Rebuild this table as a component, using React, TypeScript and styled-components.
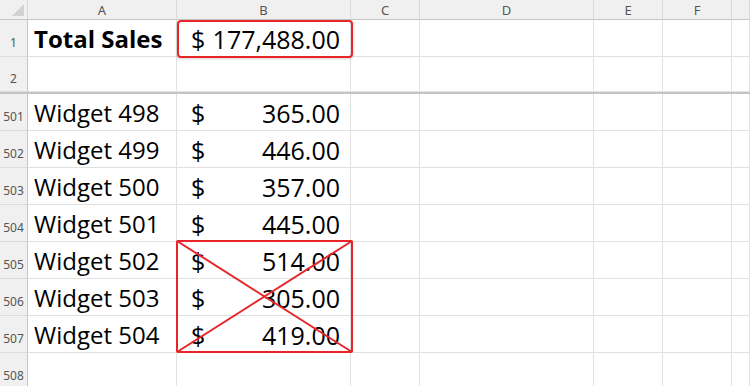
import * as React from 'react';
import styled, { createGlobalStyle } from 'styled-components';

const GlobalStyle = createGlobalStyle`
    html, body {
        margin: 0;
        padding: 0;
        background: #ffffff;
    }
    body {
        font-family: "Open Sans", "Noto Sans", sans-serif;
    }
`;

const COLS = '28px 149px 174px 69px 174px 69px 69px 1fr';

const Sheet = styled.div`
    position: relative;
    width: 750px;
    height: 386px;
    overflow: hidden;
    background: #ffffff;
`;

const Row = styled.div<{ $height: number; $frozen?: boolean }>`
    display: grid;
    grid-template-columns: ${COLS};
    height: ${(p) => p.$height}px;
    box-sizing: border-box;
    border-bottom: ${(p) => (p.$frozen ? '2px solid #c4c4c4' : 'none')};
`;

const ColHeader = styled.div`
    display: flex;
    align-items: center;
    justify-content: center;
    background: #f0f0f0;
    border-right: 1px solid #d9d9d9;
    border-bottom: 1px solid #c6c6c6;
    box-sizing: border-box;
    font-family: "Noto Sans", sans-serif;
    font-size: 13px;
    color: #555555;
    padding-top: 1px;
`;

const Corner = styled(ColHeader)`
    position: relative;
    &::after {
        content: '';
        position: absolute;
        right: 3px;
        bottom: 3px;
        width: 0;
        height: 0;
        border-left: 12px solid transparent;
        border-bottom: 12px solid #d2d2d2;
    }
`;

const RowHeader = styled.div`
    display: flex;
    align-items: center;
    justify-content: center;
    background: #f0f0f0;
    border-right: 1px solid #c6c6c6;
    border-bottom: 1px solid #dcdcdc;
    box-sizing: border-box;
    font-family: "Noto Sans", sans-serif;
    font-size: 12px;
    color: #555555;
    padding-top: 8px;
`;

const Cell = styled.div<{ $bold?: boolean }>`
    display: flex;
    align-items: center;
    border-right: 1px solid #e1e1e1;
    border-bottom: 1px solid #e1e1e1;
    box-sizing: border-box;
    padding: 1px 6px 0 6px;
    font-size: 24px;
    font-weight: ${(p) => (p.$bold ? 700 : 400)};
    color: #000000;
    white-space: nowrap;
    overflow: hidden;
`;

const MoneyCell = styled(Cell)`
    justify-content: space-between;
    padding: 1px 10px 0 14px;
`;

// digits in the sheet's font run a little wider than Open Sans
const Amount = styled.span`
    font-size: 25px;
`;

const Highlight = styled.div`
    position: absolute;
    left: 177px;
    top: 20px;
    width: 176px;
    height: 38px;
    box-sizing: border-box;
    border: 2px solid #e8262a;
    border-radius: 4px;
    box-shadow: 0 1px 3px rgba(0, 0, 0, 0.18);
    pointer-events: none;
`;

const CrossOut = styled.svg`
    position: absolute;
    left: 176px;
    top: 240px;
    overflow: visible;
    pointer-events: none;
`;

const columns = ['A', 'B', 'C', 'D', 'E', 'F', ''];

const items = [
    { n: 501, name: 'Widget 498', price: '365.00' },
    { n: 502, name: 'Widget 499', price: '446.00' },
    { n: 503, name: 'Widget 500', price: '357.00' },
    { n: 504, name: 'Widget 501', price: '445.00' },
    { n: 505, name: 'Widget 502', price: '514.00' },
    { n: 506, name: 'Widget 503', price: '305.00' },
    { n: 507, name: 'Widget 504', price: '419.00' },
];

const EmptyCells = ({ count }: { count: number }) => (
    <>
        {Array.from({ length: count }).map((_, i) => (
            <Cell key={i} />
        ))}
    </>
);

export default function App() {
    return (
        <Sheet>
            <GlobalStyle />
            <Row $height={20}>
                <Corner />
                {columns.map((c, i) => (
                    <ColHeader key={i}>{c}</ColHeader>
                ))}
            </Row>
            <Row $height={37}>
                <RowHeader>1</RowHeader>
                <Cell $bold>Total Sales</Cell>
                <MoneyCell>
                    <Amount>$</Amount>
                    <Amount>177,488.00</Amount>
                </MoneyCell>
                <EmptyCells count={5} />
            </Row>
            <Row $height={37} $frozen>
                <RowHeader>2</RowHeader>
                <EmptyCells count={7} />
            </Row>
            {items.map((it) => (
                <Row $height={37} key={it.n}>
                    <RowHeader>{it.n}</RowHeader>
                    <Cell>{it.name}</Cell>
                    <MoneyCell>
                        <Amount>$</Amount>
                        <Amount>{it.price}</Amount>
                    </MoneyCell>
                    <EmptyCells count={5} />
                </Row>
            ))}
            <Row $height={37}>
                <RowHeader>508</RowHeader>
                <EmptyCells count={7} />
            </Row>

            <Highlight />
            <CrossOut width={177} height={113} viewBox="0 0 177 113">
                <rect x={1} y={1} width={175} height={111} fill="none" stroke="#e8262a" strokeWidth={2} rx={1} />
                <line x1={1} y1={1} x2={176} y2={112} stroke="#e8262a" strokeWidth={2} />
                <line x1={176} y1={1} x2={1} y2={112} stroke="#e8262a" strokeWidth={2} />
            </CrossOut>
        </Sheet>
    );
}
